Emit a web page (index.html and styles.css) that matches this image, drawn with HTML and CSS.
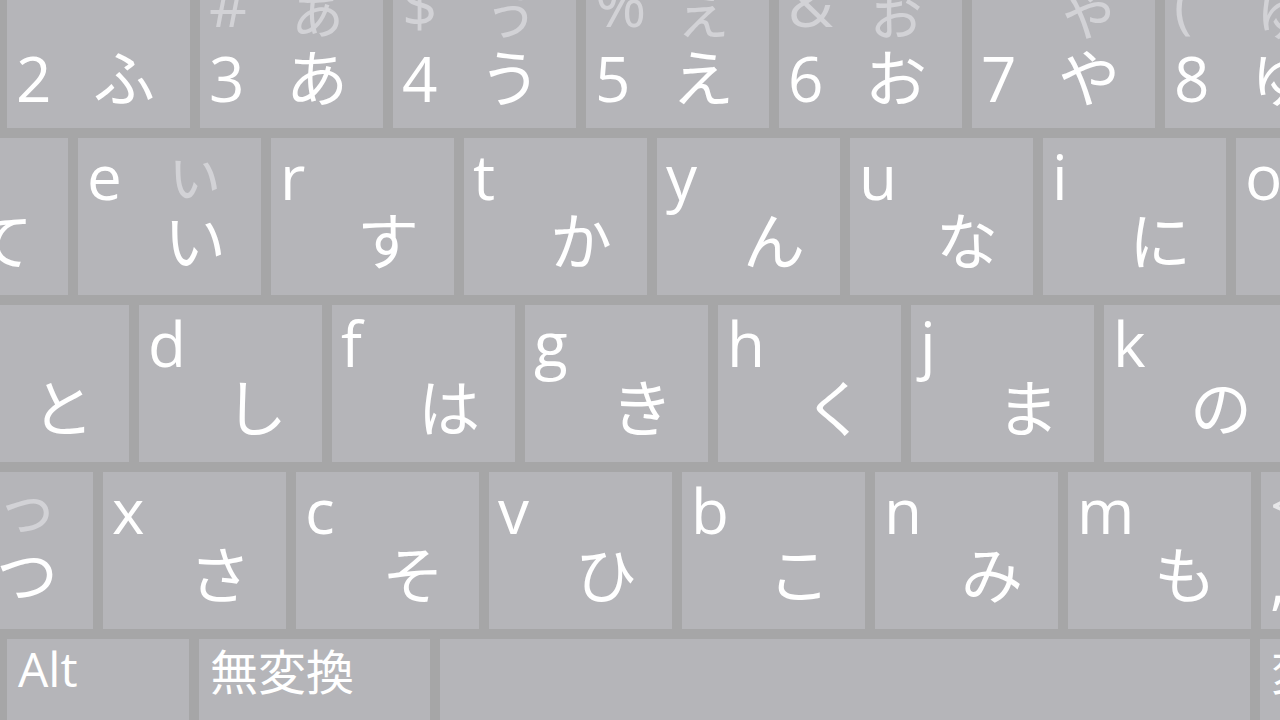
FILE: index.html
```html
<!DOCTYPE html>
<html lang="ja">
<head>
<meta charset="utf-8">
<title>Keyboard</title>
<link rel="stylesheet" href="styles.css">
</head>
<body>
<div class="kb">
  <div class="row r1">
    <div class="key num"><div class="ca"><span class="lat dim sym">"</span><span class="lat">2</span></div><div class="cb"><span class="kana">ふ</span></div></div>
    <div class="key num"><div class="ca"><span class="lat dim sym">#</span><span class="lat">3</span></div><div class="cb"><span class="kana dim">ぁ</span><span class="kana">あ</span></div></div>
    <div class="key num"><div class="ca"><span class="lat dim sym">$</span><span class="lat">4</span></div><div class="cb"><span class="kana dim">ぅ</span><span class="kana">う</span></div></div>
    <div class="key num"><div class="ca"><span class="lat dim sym">%</span><span class="lat">5</span></div><div class="cb"><span class="kana dim">ぇ</span><span class="kana">え</span></div></div>
    <div class="key num"><div class="ca"><span class="lat dim sym">&amp;</span><span class="lat">6</span></div><div class="cb"><span class="kana dim">ぉ</span><span class="kana">お</span></div></div>
    <div class="key num"><div class="ca"><span class="lat dim sym">'</span><span class="lat">7</span></div><div class="cb"><span class="kana dim">ゃ</span><span class="kana">や</span></div></div>
    <div class="key num"><div class="ca"><span class="lat dim sym">(</span><span class="lat">8</span></div><div class="cb"><span class="kana dim">ゅ</span><span class="kana">ゆ</span></div></div>
  </div>
  <div class="row r2">
    <div class="key letter"><div class="ca"><span class="lat">w</span></div><div class="cb"><span class="kana">て</span></div></div>
    <div class="key letter"><div class="ca"><span class="lat">e</span></div><div class="cb"><span class="kana dim">ぃ</span><span class="kana">い</span></div></div>
    <div class="key letter"><div class="ca"><span class="lat">r</span></div><div class="cb"><span class="kana">す</span></div></div>
    <div class="key letter"><div class="ca"><span class="lat">t</span></div><div class="cb"><span class="kana">か</span></div></div>
    <div class="key letter"><div class="ca"><span class="lat">y</span></div><div class="cb"><span class="kana">ん</span></div></div>
    <div class="key letter"><div class="ca"><span class="lat">u</span></div><div class="cb"><span class="kana">な</span></div></div>
    <div class="key letter"><div class="ca"><span class="lat">i</span></div><div class="cb"><span class="kana">に</span></div></div>
    <div class="key letter"><div class="ca"><span class="lat">o</span></div><div class="cb"><span class="kana">ら</span></div></div>
  </div>
  <div class="row r3">
    <div class="key letter"><div class="ca"><span class="lat">s</span></div><div class="cb"><span class="kana">と</span></div></div>
    <div class="key letter"><div class="ca"><span class="lat">d</span></div><div class="cb"><span class="kana">し</span></div></div>
    <div class="key letter"><div class="ca"><span class="lat">f</span></div><div class="cb"><span class="kana">は</span></div></div>
    <div class="key letter"><div class="ca"><span class="lat">g</span></div><div class="cb"><span class="kana">き</span></div></div>
    <div class="key letter"><div class="ca"><span class="lat">h</span></div><div class="cb"><span class="kana">く</span></div></div>
    <div class="key letter"><div class="ca"><span class="lat">j</span></div><div class="cb"><span class="kana">ま</span></div></div>
    <div class="key letter"><div class="ca"><span class="lat">k</span></div><div class="cb"><span class="kana">の</span></div></div>
  </div>
  <div class="row r4">
    <div class="key letter"><div class="ca"><span class="lat">z</span></div><div class="cb"><span class="kana dim">っ</span><span class="kana">つ</span></div></div>
    <div class="key letter"><div class="ca"><span class="lat">x</span></div><div class="cb"><span class="kana">さ</span></div></div>
    <div class="key letter"><div class="ca"><span class="lat">c</span></div><div class="cb"><span class="kana">そ</span></div></div>
    <div class="key letter"><div class="ca"><span class="lat">v</span></div><div class="cb"><span class="kana">ひ</span></div></div>
    <div class="key letter"><div class="ca"><span class="lat">b</span></div><div class="cb"><span class="kana">こ</span></div></div>
    <div class="key letter"><div class="ca"><span class="lat">n</span></div><div class="cb"><span class="kana">み</span></div></div>
    <div class="key letter"><div class="ca"><span class="lat">m</span></div><div class="cb"><span class="kana">も</span></div></div>
    <div class="key num"><div class="ca"><span class="lat semi sym">&lt;</span><span class="lat">,</span></div><div class="cb"><span class="kana dim">、</span><span class="kana">ね</span></div></div>
  </div>
  <div class="row r5">
    <div class="key mod w-alt"><span class="mlabel">Alt</span></div>
    <div class="key mod w-muhenkan"><span class="mlabel jp">無変換</span></div>
    <div class="key mod w-space"></div>
    <div class="key mod w-henkan"><span class="mlabel jp">変換</span></div>
  </div>
</div>
</body>
</html>
```

FILE: styles.css
```css
html, body {
  margin: 0;
  height: 100%;
}

body {
  background: #a6a6a7;
  overflow: hidden;
  font-family: "Open Sans", "Noto Sans CJK JP", sans-serif;
  color: #ffffff;
}

.kb {
  display: flex;
  flex-direction: column;
  gap: 10px;
  margin-top: -29px;
}

.row {
  display: flex;
  gap: 10px;
}

.r1 { margin-left: 7px; }
.r2 { margin-left: -115px; }
.r3 { margin-left: -54px; }
.r4 { margin-left: -90px; }
.r5 { margin-left: 7px; }

.key {
  flex: 0 0 183px;
  height: 157px;
  box-sizing: border-box;
  background: #b5b5b9;
  display: flex;
  padding-left: 9px;
}

.ca {
  width: 77px;
  flex-shrink: 0;
  display: flex;
  flex-direction: column;
}

.cb {
  display: flex;
  flex-direction: column;
  justify-content: flex-end;
  padding-bottom: 23px;
}

.lat {
  font-size: 62px;
  line-height: 68px;
  font-weight: 400;
  white-space: nowrap;
}

.letter .ca {
  padding-top: 4px;
}

.num .ca {
  justify-content: flex-end;
  padding-bottom: 16px;
}

.num .sym {
  margin-bottom: 7px;
}

.r1 .cb {
  padding-bottom: 19px;
}

.kana {
  font-family: "Noto Sans CJK JP", sans-serif;
  font-size: 62px;
  line-height: 68px;
  font-weight: 400;
  white-space: nowrap;
}

.dim {
  color: #d2d2d6;
}

.semi {
  color: #e6e6e8;
}

.mod {
  padding-left: 11px;
}

.w-alt { flex-basis: 182px; }
.w-muhenkan { flex-basis: 231px; }
.w-space { flex-basis: 810px; }
.w-henkan { flex-basis: 183px; }

.mlabel {
  font-size: 48px;
  line-height: 56px;
  padding-top: 2px;
  font-weight: 400;
  white-space: nowrap;
}

.mlabel.jp {
  font-family: "Noto Sans CJK JP", sans-serif;
}
```
